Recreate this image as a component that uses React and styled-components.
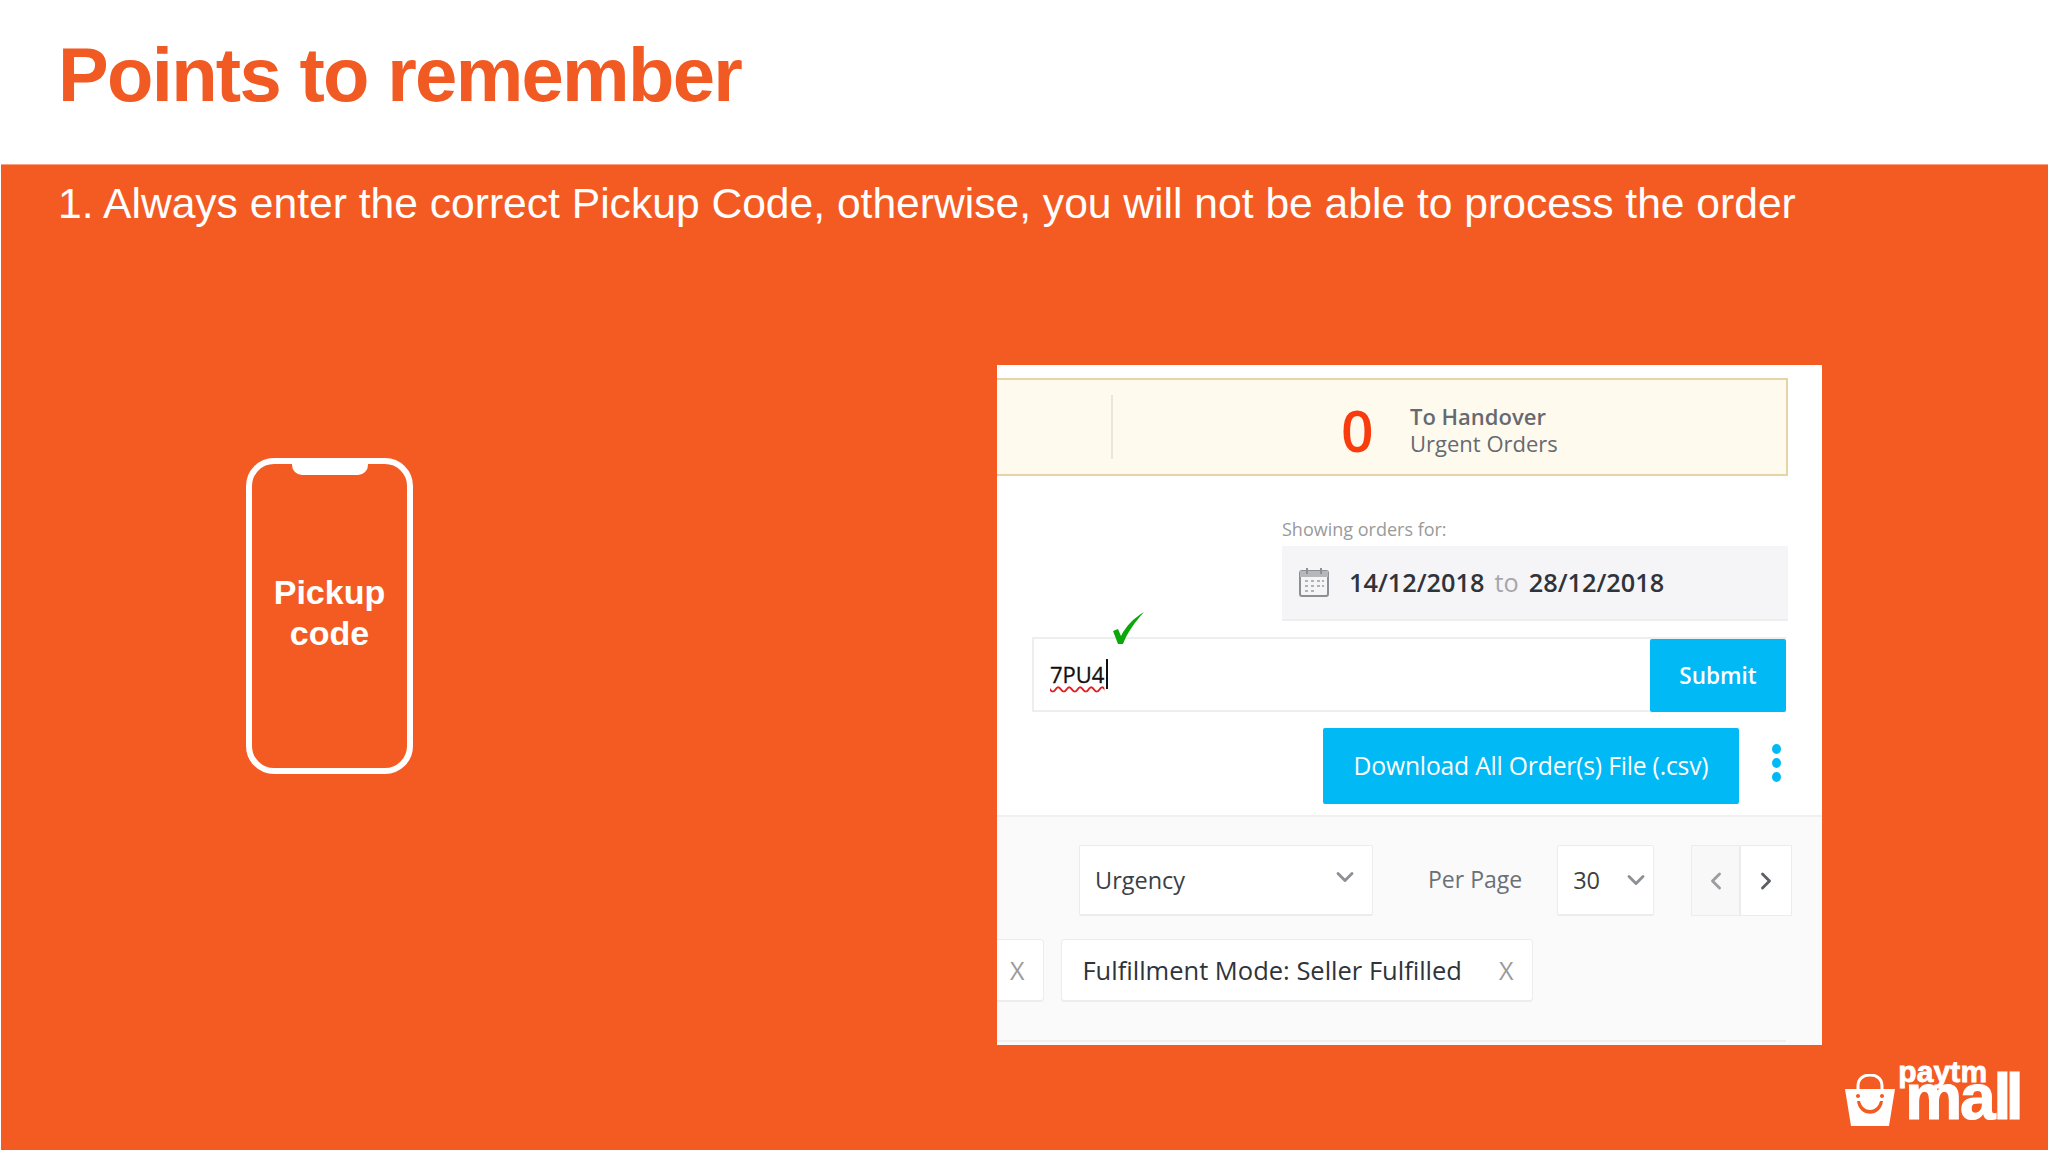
import styled, { createGlobalStyle } from "styled-components";
import { ChevronDown, ChevronLeft, ChevronRight } from "lucide-react";

const GlobalStyle = createGlobalStyle`
  html, body {
    margin: 0;
    padding: 0;
    background: #ffffff;
  }
  * {
    box-sizing: border-box;
  }
`;

const Slide = styled.div`
  width: 2048px;
  height: 1152px;
  overflow: hidden;
  display: flex;
  flex-direction: column;
  font-family: "Liberation Sans", Arial, sans-serif;
`;

const Header = styled.header`
  height: 164px;
  padding: 31px 0 0 58px;
`;

const Title = styled.h1`
  margin: 0;
  font-size: 76px;
  line-height: 88px;
  font-weight: 700;
  letter-spacing: -1.7px;
  color: #f15a22;
`;

const Panel = styled.main`
  height: 986px;
  margin-left: 1px;
  background: #f45b23;
  border-top: 1px solid #f9a27e;
  display: flex;
  flex-direction: column;
`;

const Note = styled.p`
  margin: 0;
  padding: 13px 0 0 57px;
  font-size: 42.6px;
  line-height: 50px;
  color: #ffffff;
`;

const Stage = styled.div`
  margin-top: 137px;
  display: flex;
  align-items: flex-start;
`;

const Phone = styled.div`
  position: relative;
  width: 167px;
  height: 316px;
  margin: 93px 0 0 245px;
  border: 6px solid #ffffff;
  border-radius: 28px;
  display: flex;
  flex-direction: column;
  align-items: center;
  justify-content: center;
  padding-bottom: 6px;
  font-size: 34px;
  line-height: 41px;
  font-weight: 700;
  text-align: center;
  color: #ffffff;
`;

const Notch = styled.span`
  position: absolute;
  top: -1px;
  left: 40px;
  width: 76px;
  height: 12px;
  background: #ffffff;
  border-radius: 0 0 10px 10px;
`;

const Card = styled.section`
  width: 825px;
  height: 680px;
  margin-left: 584px;
  padding-top: 13px;
  background: #ffffff;
  overflow: hidden;
  display: flex;
  flex-direction: column;
  font-family: "Open Sans", sans-serif;
`;

const Banner = styled.div`
  height: 98px;
  margin-right: 34px;
  background: #fffaee;
  border: solid #e6d3a6;
  border-width: 2px 2px 2px 0;
  display: flex;
  align-items: center;
`;

const BannerSpacer = styled.div`
  width: 116px;
  height: 64px;
  border-right: 2px solid #ece6d6;
`;

const Count = styled.div`
  margin: 6px 0 0 228px;
  width: 69px;
  font-size: 57px;
  line-height: 60px;
  font-weight: 600;
  color: #f83c0e;
`;

const BannerText = styled.div`
  margin-top: 6px;
  font-size: 22px;
  line-height: 27px;
  color: #666a70;
`;

const BannerStrong = styled.div`
  font-weight: 600;
`;

const DateBlock = styled.div`
  margin: 41px 34px 0 285px;
`;

const DateLabel = styled.div`
  font-size: 18px;
  line-height: 24px;
  margin-bottom: 5px;
  color: #9a9a9a;
`;

const DateBox = styled.div`
  height: 75px;
  padding: 0 0 2px 17px;
  background: #f5f5f7;
  border-bottom: 2px solid #eeeeef;
  display: flex;
  align-items: center;
  font-size: 25.3px;
  font-weight: 600;
  color: #30343a;
`;

const DateTo = styled.span`
  margin: 0 10px;
  font-weight: 400;
  color: #a4a7ab;
`;

const CalendarIcon = styled.svg`
  width: 30px;
  height: 30px;
  margin-right: 20px;
`;

const CodeRow = styled.div`
  position: relative;
  height: 75px;
  margin: 16px 36px 0 35px;
  border: 2px solid #eeeeee;
  border-right: 0;
  display: flex;
  align-items: center;
  justify-content: space-between;
`;

const CheckMark = styled.svg`
  position: absolute;
  left: 79px;
  top: -27px;
  width: 32px;
  height: 33px;
`;

const CodeText = styled.span`
  margin: -2px 0 0 16px;
  padding-right: 2px;
  border-right: 2px solid #111111;
  font-size: 22px;
  line-height: 30px;
  color: #111111;
  -webkit-text-stroke: 0.3px #111111;
  text-decoration: underline wavy #e02020 2px;
  text-underline-offset: 3px;
`;

const SubmitButton = styled.button`
  align-self: flex-end;
  width: 136px;
  height: 73px;
  margin-bottom: -2px;
  padding: 0;
  border: 0;
  border-radius: 2px;
  background: #00b9f5;
  color: #ffffff;
  font: 600 22.5px "Open Sans", sans-serif;
`;

const DownloadRow = styled.div`
  margin: 16px 0 0 326px;
  display: flex;
  align-items: center;
`;

const DownloadButton = styled.button`
  width: 416px;
  height: 76px;
  padding: 0 0 2px;
  border: 0;
  border-radius: 2px;
  background: #00b9f5;
  color: #ffffff;
  font: 400 24.7px "Open Sans", sans-serif;
  letter-spacing: -0.2px;
`;

const Dots = styled.div`
  margin: -6px 0 0 33px;
  display: flex;
  flex-direction: column;
  gap: 4px;
`;

const Dot = styled.span`
  width: 9px;
  height: 10px;
  border-radius: 50%;
  background: #00b9f5;
`;

const Filters = styled.div`
  flex: 1;
  margin-top: 11px;
  padding-top: 28px;
  background: #fafafb;
  border-top: 2px solid #f0f0f0;
  display: flex;
  flex-direction: column;
`;

const FilterRow = styled.div`
  height: 71px;
  padding-left: 82px;
  display: flex;
  align-items: center;
`;

const Select = styled.div`
  width: ${(p) => p.$width}px;
  height: 71px;
  padding: 0 ${(p) => p.$right}px 0 ${(p) => p.$left}px;
  background: #ffffff;
  border: 1px solid #ececec;
  border-bottom-width: 2px;
  border-radius: 2px;
  display: flex;
  align-items: center;
  justify-content: space-between;
  font-size: 23.5px;
  color: #3a3f46;
`;

const SelectArrow = styled(ChevronDown)`
  width: 28px;
  height: 28px;
  margin-top: ${(p) => p.$shift}px;
  color: #8d9196;
`;

const PerPage = styled.span`
  margin: -4px 35px 0 55px;
  font-size: 23px;
  color: #6a7078;
`;

const Pager = styled.div`
  margin-left: 37px;
  display: flex;
`;

const PagerButton = styled.div`
  width: ${(p) => (p.$prev ? 49 : 52)}px;
  height: 71px;
  background: ${(p) => (p.$prev ? "#f8f8f8" : "#ffffff")};
  border: 1px solid #ececec;
  display: flex;
  align-items: center;
  justify-content: center;
  color: ${(p) => (p.$prev ? "#9a9da1" : "#5c6066")};
`;

const ChipRow = styled.div`
  margin: 23px 0 0 -8px;
  display: flex;
  gap: 17px;
`;

const Chip = styled.div`
  height: 63px;
  padding: 0 19px 0 20px;
  background: #ffffff;
  border: 1px solid #ececec;
  border-bottom-width: 2px;
  border-radius: 4px;
  display: flex;
  align-items: center;
  gap: 37px;
  font-size: 25.5px;
  color: #2f343b;
`;

const ChipClose = styled.span`
  font-size: 25px;
  color: #9a9a9a;
`;

const BottomLine = styled.div`
  height: 2px;
  margin: 38px 36px 0 0;
  background: #efefef;
`;

const Footer = styled.footer`
  margin-top: 15px;
  padding-right: 30px;
  display: flex;
  justify-content: flex-end;
`;

const Logo = styled.div`
  display: flex;
  align-items: flex-end;
  color: #ffffff;
  font-weight: 700;
`;

const BagIcon = styled.svg`
  width: 50px;
  height: 52px;
  margin-right: 10px;
`;

const LogoText = styled.div`
  display: flex;
  flex-direction: column;
`;

const LogoSmall = styled.span`
  margin: -3px 0 -19px -7px;
  font-size: 30px;
  line-height: 30px;
  letter-spacing: 0.1px;
  -webkit-text-stroke: 0.8px #ffffff;
`;

const LogoBig = styled.span`
  font-size: 64px;
  line-height: 58px;
  letter-spacing: -2.2px;
  -webkit-text-stroke: 1.2px #ffffff;
`;

const LogoTail = styled.span`
  letter-spacing: -5.5px;
`;

export default function App() {
  return (
    <>
      <GlobalStyle />
      <Slide>
        <Header>
          <Title>Points to remember</Title>
        </Header>
        <Panel>
          <Note>
            1. Always enter the correct Pickup Code, otherwise, you will not be
            able to process the order
          </Note>
          <Stage>
            <Phone>
              <Notch />
              <div>Pickup</div>
              <div>code</div>
            </Phone>
            <Card>
              <Banner>
                <BannerSpacer />
                <Count>0</Count>
                <BannerText>
                  <BannerStrong>To Handover</BannerStrong>
                  <div>Urgent Orders</div>
                </BannerText>
              </Banner>
              <DateBlock>
                <DateLabel>Showing orders for:</DateLabel>
                <DateBox>
                  <CalendarIcon viewBox="0 0 30 30" fill="none">
                    <rect x="1" y="4" width="28" height="25" rx="2" stroke="#8c8f94" strokeWidth="2" />
                    <rect x="1" y="4" width="28" height="6" fill="#b5b7ba" />
                    <path d="M8 1v6M22 1v6" stroke="#8c8f94" strokeWidth="2" />
                    <path
                      d="M6 14h3M12 14h3M18 14h3M23 14h2M6 19h3M12 19h3M18 19h3M23 19h2M6 24h3M12 24h3"
                      stroke="#b0b2b6"
                      strokeWidth="2"
                    />
                  </CalendarIcon>
                  14/12/2018
                  <DateTo>to</DateTo>
                  28/12/2018
                </DateBox>
              </DateBlock>
              <CodeRow>
                <CheckMark viewBox="0 0 32 33">
                  <path d="M0 19 L5 17 L8 24 C13 14 21 6 31 0 C22 10 14 21 10 32 L5 32 Z" fill="#0aa80a" />
                </CheckMark>
                <CodeText>7PU4</CodeText>
                <SubmitButton>Submit</SubmitButton>
              </CodeRow>
              <DownloadRow>
                <DownloadButton>Download All Order(s) File (.csv)</DownloadButton>
                <Dots>
                  <Dot />
                  <Dot />
                  <Dot />
                </Dots>
              </DownloadRow>
              <Filters>
                <FilterRow>
                  <Select $width={294} $left={15} $right={13}>
                    Urgency
                    <SelectArrow $shift={-6} strokeWidth={2.5} />
                  </Select>
                  <PerPage>Per Page</PerPage>
                  <Select $width={97} $left={15} $right={3}>
                    30
                    <SelectArrow $shift={0} strokeWidth={2.5} />
                  </Select>
                  <Pager>
                    <PagerButton $prev>
                      <ChevronLeft size={28} strokeWidth={2.5} />
                    </PagerButton>
                    <PagerButton>
                      <ChevronRight size={28} strokeWidth={2.5} />
                    </PagerButton>
                  </Pager>
                </FilterRow>
                <ChipRow>
                  <Chip>
                    <ChipClose>X</ChipClose>
                  </Chip>
                  <Chip>
                    Fulfillment Mode: Seller Fulfilled
                    <ChipClose>X</ChipClose>
                  </Chip>
                </ChipRow>
                <BottomLine />
              </Filters>
            </Card>
          </Stage>
          <Footer>
            <Logo>
              <BagIcon viewBox="0 0 50 52">
                <path d="M13 18 V12 C13 5 18 1 25 1 C32 1 37 5 37 12 V18" fill="none" stroke="#ffffff" strokeWidth="3" />
                <path
                  fillRule="evenodd"
                  fill="#ffffff"
                  d="M0 15 H50 L44 52 H6 Z M13 20 a2 2 0 1 0 0.01 0 Z M37 20 a2 2 0 1 0 0.01 0 Z M12 27 C14 44 36 44 38 27 L35 27 C32 39 18 39 15 27 Z"
                />
              </BagIcon>
              <LogoText>
                <LogoSmall>paytm</LogoSmall>
                <LogoBig>
                  ma<LogoTail>ll</LogoTail>
                </LogoBig>
              </LogoText>
            </Logo>
          </Footer>
        </Panel>
      </Slide>
    </>
  );
}
